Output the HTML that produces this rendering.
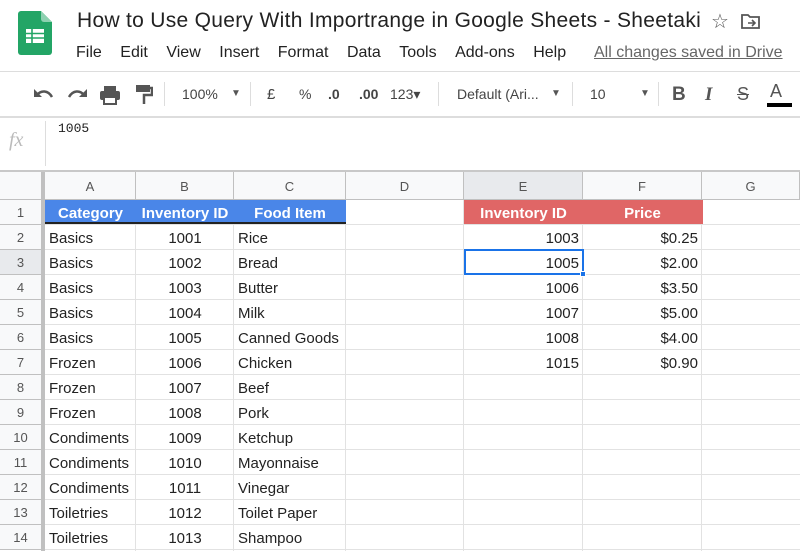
<!DOCTYPE html>
<html><head><meta charset="utf-8"><style>
*{margin:0;padding:0;box-sizing:border-box}
body{width:800px;height:551px;overflow:hidden;background:#fff;font-family:"Liberation Sans",Arial,sans-serif;position:relative;color:#222}
.a{position:absolute}
.menu span{margin-right:18.5px}
.tb{color:#444;font-size:14px}
.c{position:absolute;height:25px;line-height:27px;font-size:15px;color:#222;white-space:nowrap;overflow:hidden;padding:0 4px}
.ch{position:absolute;top:172px;height:28px;line-height:29px;text-align:center;font-size:13px;color:#555;background:#f8f9fa;border-right:1px solid #c0c0c0}
.rh{position:absolute;left:0;width:41px;height:25px;line-height:26px;text-align:center;font-size:13px;color:#555;background:#f8f9fa;border-bottom:1px solid #c0c0c0}
</style></head><body>
<svg class="a" style="left:18px;top:11px" width="34" height="44" viewBox="0 0 34 44"><path d="M3 0h20l11 11v30a3 3 0 0 1-3 3H3a3 3 0 0 1-3-3V3a3 3 0 0 1 3-3z" fill="#23a566"/><path d="M23 0l11 11H26a3 3 0 0 1-3-3z" fill="#8ed1b1"/><rect x="8" y="18" width="18" height="14" fill="#fff"/><path d="M8 22.5h18M8 27h18M14 18v14" stroke="#23a566" stroke-width="1.6"/></svg>
<div class="a" style="left:77px;top:9px;font-size:21px;color:#222;letter-spacing:0.3px">How to Use Query With Importrange in Google Sheets - Sheetaki</div>
<div class="a" style="left:711px;top:9px;font-size:20px;color:#555">☆</div>
<svg class="a" style="left:741px;top:13px" width="20" height="16" viewBox="0 0 20 16"><path d="M1 2h6l2 2h9v11H1z" fill="none" stroke="#555" stroke-width="1.8"/><path d="M7 10h6M11 7l3 3-3 3" fill="none" stroke="#555" stroke-width="1.6"/></svg>
<div class="a menu" style="left:76px;top:44px;font-size:16px;color:#222"><span>File</span><span>Edit</span><span>View</span><span>Insert</span><span>Format</span><span>Data</span><span>Tools</span><span>Add-ons</span><span>Help</span></div>
<div class="a" style="left:594px;top:44px;font-size:16px;color:#666;text-decoration:underline">All changes saved in Drive</div>
<div class="a" style="left:0;top:71px;width:800px;height:1px;background:#ddd"></div>
<svg class="a" style="left:33px;top:86px" width="22" height="16" viewBox="0 0 22 16"><path d="M4 9c4-5 11-5 15 2" fill="none" stroke="#555" stroke-width="2.5"/><path d="M1 3v8h8z" fill="#555"/></svg>
<svg class="a" style="left:66px;top:86px" width="22" height="16" viewBox="0 0 22 16"><path d="M18 9c-4-5-11-5-15 2" fill="none" stroke="#555" stroke-width="2.5"/><path d="M21 3v8h-8z" fill="#555"/></svg>
<svg class="a" style="left:99px;top:85px" width="22" height="20" viewBox="0 0 22 20"><rect x="5" y="1" width="12" height="5" fill="#555"/><rect x="1" y="6" width="20" height="9" rx="2" fill="#555"/><rect x="5" y="12" width="12" height="7" fill="#fff" stroke="#555" stroke-width="2"/></svg>
<svg class="a" style="left:135px;top:84px" width="18" height="22" viewBox="0 0 18 22"><rect x="1" y="1" width="14" height="7" fill="#555"/><path d="M15 4h2v7H9v9" fill="none" stroke="#555" stroke-width="2.5"/></svg>
<div class="a" style="left:164px;top:82px;width:1px;height:24px;background:#ddd"></div>
<div class="a tb" style="left:182px;top:86px">100%</div>
<div class="a tb" style="left:231px;top:88px;font-size:10px;color:#555">▼</div>
<div class="a" style="left:250px;top:82px;width:1px;height:24px;background:#ddd"></div>
<div class="a tb" style="left:267px;top:86px;font-size:15px">£</div>
<div class="a tb" style="left:299px;top:86px">%</div>
<div class="a tb" style="left:328px;top:86px;font-weight:bold">.0</div>
<div class="a tb" style="left:359px;top:86px;font-weight:bold">.00</div>
<div class="a tb" style="left:390px;top:86px">123▾</div>
<div class="a" style="left:438px;top:82px;width:1px;height:24px;background:#ddd"></div>
<div class="a tb" style="left:457px;top:86px">Default (Ari...</div>
<div class="a tb" style="left:551px;top:88px;font-size:10px;color:#555">▼</div>
<div class="a" style="left:572px;top:82px;width:1px;height:24px;background:#ddd"></div>
<div class="a tb" style="left:590px;top:86px">10</div>
<div class="a tb" style="left:640px;top:88px;font-size:10px;color:#555">▼</div>
<div class="a" style="left:658px;top:82px;width:1px;height:24px;background:#ddd"></div>
<div class="a" style="left:672px;top:84px;font-size:19px;font-weight:bold;color:#555">B</div>
<div class="a" style="left:705px;top:84px;font-size:19px;font-style:italic;font-family:'Liberation Serif',serif;font-weight:bold;color:#555">I</div>
<div class="a" style="left:737px;top:84px;font-size:18px;color:#555;text-decoration:line-through">S</div>
<div class="a" style="left:770px;top:81px;font-size:18px;color:#555">A</div>
<div class="a" style="left:767px;top:103px;width:25px;height:4px;background:#000"></div>
<div class="a" style="left:0;top:116px;width:800px;height:2px;background:#ddd"></div>
<div class="a" style="left:9px;top:129px;font-size:20px;font-style:italic;color:#bbb;font-family:'Liberation Serif',serif">fx</div>
<div class="a" style="left:45px;top:121px;width:1px;height:45px;background:#ddd"></div>
<div class="a" style="left:58px;top:121px;font-size:13px;font-family:'Liberation Mono',monospace;color:#222">1005</div>
<div class="a" style="left:0;top:170px;width:800px;height:2px;background:#c8c8c8"></div>
<div class="ch" style="left:0;width:45px;border-right:4px solid #c0c0c0"></div>
<div class="ch" style="left:45px;width:91px">A</div>
<div class="ch" style="left:136px;width:98px">B</div>
<div class="ch" style="left:234px;width:112px">C</div>
<div class="ch" style="left:346px;width:118px">D</div>
<div class="ch" style="left:464px;width:119px;background:#e8eaed">E</div>
<div class="ch" style="left:583px;width:119px">F</div>
<div class="ch" style="left:702px;width:98px">G</div>
<div class="a" style="left:0;top:199px;width:800px;height:1px;background:#c0c0c0"></div>
<svg class="a" style="left:0;top:200px" width="800" height="351">
<g stroke="#e2e2e2" stroke-width="1">
<line x1="45" y1="24.5" x2="800" y2="24.5"/><line x1="45" y1="49.5" x2="800" y2="49.5"/><line x1="45" y1="74.5" x2="800" y2="74.5"/><line x1="45" y1="99.5" x2="800" y2="99.5"/><line x1="45" y1="124.5" x2="800" y2="124.5"/><line x1="45" y1="149.5" x2="800" y2="149.5"/><line x1="45" y1="174.5" x2="800" y2="174.5"/><line x1="45" y1="199.5" x2="800" y2="199.5"/><line x1="45" y1="224.5" x2="800" y2="224.5"/><line x1="45" y1="249.5" x2="800" y2="249.5"/><line x1="45" y1="274.5" x2="800" y2="274.5"/><line x1="45" y1="299.5" x2="800" y2="299.5"/><line x1="45" y1="324.5" x2="800" y2="324.5"/><line x1="45" y1="349.5" x2="800" y2="349.5"/>
<line x1="135.5" y1="0" x2="135.5" y2="351"/><line x1="233.5" y1="0" x2="233.5" y2="351"/><line x1="345.5" y1="0" x2="345.5" y2="351"/><line x1="463.5" y1="0" x2="463.5" y2="351"/><line x1="582.5" y1="0" x2="582.5" y2="351"/><line x1="701.5" y1="0" x2="701.5" y2="351"/>
</g></svg>
<div class="a" style="left:41px;top:200px;width:4px;height:351px;background:#c0c0c0"></div>
<div class="rh" style="top:200px">1</div><div class="rh" style="top:225px">2</div><div class="rh" style="top:250px;background:#e8eaed">3</div><div class="rh" style="top:275px">4</div><div class="rh" style="top:300px">5</div><div class="rh" style="top:325px">6</div><div class="rh" style="top:350px">7</div><div class="rh" style="top:375px">8</div><div class="rh" style="top:400px">9</div><div class="rh" style="top:425px">10</div><div class="rh" style="top:450px">11</div><div class="rh" style="top:475px">12</div><div class="rh" style="top:500px">13</div><div class="rh" style="top:525px">14</div>
<div class="a" style="left:45px;top:200px;width:301px;height:24px;background:#4a86e8;border-bottom:2px solid #222"></div>
<div class="c" style="left:45px;top:200px;width:91px;text-align:center;color:#fff;font-weight:bold">Category</div>
<div class="c" style="left:136px;top:200px;width:98px;text-align:center;color:#fff;font-weight:bold;padding:0">Inventory ID</div>
<div class="c" style="left:234px;top:200px;width:112px;text-align:center;color:#fff;font-weight:bold">Food Item</div>
<div class="a" style="left:464px;top:200px;width:239px;height:24px;background:#e06666"></div>
<div class="c" style="left:464px;top:200px;width:119px;text-align:center;color:#fff;font-weight:bold">Inventory ID</div>
<div class="c" style="left:583px;top:200px;width:119px;text-align:center;color:#fff;font-weight:bold">Price</div>
<div class="a" style="left:45px;top:225px;width:91px">
<div class="c" style="top:0">Basics</div><div class="c" style="top:25px">Basics</div><div class="c" style="top:50px">Basics</div><div class="c" style="top:75px">Basics</div><div class="c" style="top:100px">Basics</div><div class="c" style="top:125px">Frozen</div><div class="c" style="top:150px">Frozen</div><div class="c" style="top:175px">Frozen</div><div class="c" style="top:200px">Condiments</div><div class="c" style="top:225px">Condiments</div><div class="c" style="top:250px">Condiments</div><div class="c" style="top:275px">Toiletries</div><div class="c" style="top:300px">Toiletries</div></div>
<div class="a" style="left:136px;top:225px;width:98px;text-align:center">
<div class="c" style="top:0;width:98px">1001</div><div class="c" style="top:25px;width:98px">1002</div><div class="c" style="top:50px;width:98px">1003</div><div class="c" style="top:75px;width:98px">1004</div><div class="c" style="top:100px;width:98px">1005</div><div class="c" style="top:125px;width:98px">1006</div><div class="c" style="top:150px;width:98px">1007</div><div class="c" style="top:175px;width:98px">1008</div><div class="c" style="top:200px;width:98px">1009</div><div class="c" style="top:225px;width:98px">1010</div><div class="c" style="top:250px;width:98px">1011</div><div class="c" style="top:275px;width:98px">1012</div><div class="c" style="top:300px;width:98px">1013</div></div>
<div class="a" style="left:234px;top:225px;width:112px">
<div class="c" style="top:0">Rice</div><div class="c" style="top:25px">Bread</div><div class="c" style="top:50px">Butter</div><div class="c" style="top:75px">Milk</div><div class="c" style="top:100px">Canned Goods</div><div class="c" style="top:125px">Chicken</div><div class="c" style="top:150px">Beef</div><div class="c" style="top:175px">Pork</div><div class="c" style="top:200px">Ketchup</div><div class="c" style="top:225px">Mayonnaise</div><div class="c" style="top:250px">Vinegar</div><div class="c" style="top:275px">Toilet Paper</div><div class="c" style="top:300px">Shampoo</div></div>
<div class="a" style="left:464px;top:225px;width:119px;text-align:right">
<div class="c" style="top:0;width:119px">1003</div><div class="c" style="top:25px;width:119px">1005</div><div class="c" style="top:50px;width:119px">1006</div><div class="c" style="top:75px;width:119px">1007</div><div class="c" style="top:100px;width:119px">1008</div><div class="c" style="top:125px;width:119px">1015</div></div>
<div class="a" style="left:583px;top:225px;width:119px;text-align:right">
<div class="c" style="top:0;width:119px">$0.25</div><div class="c" style="top:25px;width:119px">$2.00</div><div class="c" style="top:50px;width:119px">$3.50</div><div class="c" style="top:75px;width:119px">$5.00</div><div class="c" style="top:100px;width:119px">$4.00</div><div class="c" style="top:125px;width:119px">$0.90</div></div>
<div class="a" style="left:464px;top:249px;width:120px;height:26px;border:2px solid #1a73e8"></div>
<div class="a" style="left:580px;top:271px;width:6px;height:6px;background:#1a73e8;border:1px solid #fff"></div>
</body></html>
